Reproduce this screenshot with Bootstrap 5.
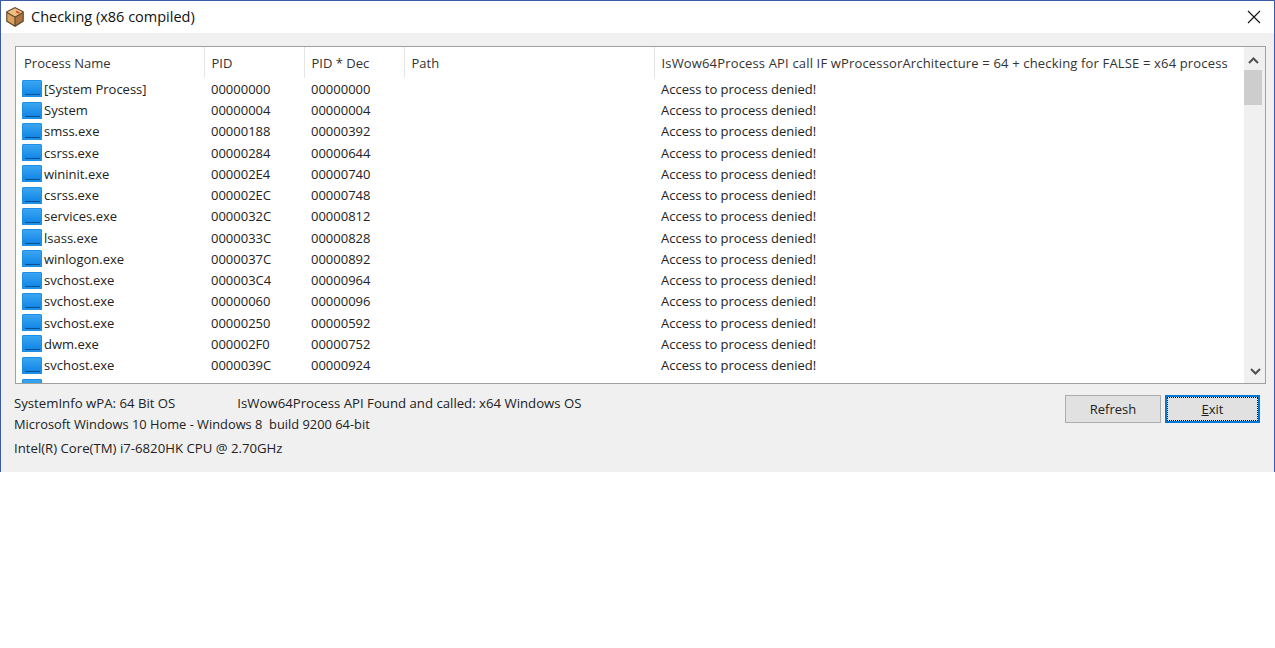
<!DOCTYPE html>
<html lang="en">
<head>
<meta charset="utf-8">
<title>Checking (x86 compiled)</title>
<link href="https://cdn.jsdelivr.net/npm/bootstrap@5.3.0/dist/css/bootstrap.min.css" rel="stylesheet">
<style>
html,body{background:#fff;margin:0;height:648px;overflow:hidden}
body{font-family:"Open Sans","Noto Sans",sans-serif;font-size:13px;color:#222}
.win{height:472px;width:1275px;background:#f0f0f0;border:1px solid #3b5ba8;border-bottom:0}
.titlebar{height:32px;background:#fff;padding-left:3px}
.titlebar .ttl{font-size:14.5px;color:#111;margin-left:5px}
.closex{margin-left:auto;margin-right:13px}
.lv{margin:13px 8px 0 14px;height:338px;border:1px solid #a0a0a0;background:#fff}
.lv-scroll{flex:1 1 auto;overflow:hidden;min-width:0}
.lv-table{table-layout:fixed;width:1228px;margin:0;--bs-table-bg:transparent;--bs-table-color:#222;color:#222}
.lv-table th,.lv-table td{padding:0 0 0 7px;white-space:nowrap;overflow:hidden;font-weight:400;vertical-align:middle;border:0}
.lv-table thead th{height:31px;padding-top:2px;color:#333}
.lv-table thead th:first-child{padding-left:8px}
.lv-table thead th+th{border-left:1px solid #e5e5e5}
.lv-table thead th.wide-head{letter-spacing:.16px}
.lv-table tbody td{height:21.25px;line-height:21px}
.lv-table tbody td:first-child{padding-left:6px}
.lv-table tbody tr:first-child td{height:22px}
.lv-table tbody tr:last-child td.tail{padding-top:3px}
.ico{display:inline-block;width:20px;height:17px;vertical-align:middle;margin-right:2px;margin-top:-3px}
.sb{width:21px;flex:0 0 21px;background:#f0f0f0;padding-top:23px}
.sb-thumb{height:35px;background:#cdcdcd;margin:0 3px 0 0}
.sb-arrow{display:block;margin:0 4px 0 auto}
.sb-up{position:absolute;margin:-13px 0 0 4px}
.foot{padding:9px 14px 0 13px;font-size:13.2px}
.foot-line{height:21px;line-height:20px}
.foot-line.l2{font-size:12.85px}
.foot-line.l3{height:24px;padding-top:3px}
.gap1{margin-left:62px}
.wbtn{width:96px;height:28px;background:#e1e1e1;border:1px solid #adadad;border-radius:0;padding:0;font-size:13px;color:#222;line-height:24px}
.wbtn:hover{background:#e1e1e1}
.wbtn-def{border:2px solid #0078d7;width:95px}
.wbtn-def .dots{display:block;height:100%;border:1px dotted #111;line-height:22px}
.btns{gap:4px;margin-top:2px}
</style>
</head>
<body>
<div class="win">
  <div class="titlebar d-flex align-items-center">
    <svg width="22" height="22" viewBox="0 0 20 20"><path d="M10 1 L18 5 V14 L10 19 L2 14 V5Z" fill="#5e4226"/><path d="M10 2 L17 5.5 L10 9.5 L3 5.5Z" fill="#eec07f"/><path d="M3 6.5 L9.5 10.5 V17.5 L3 13.5Z" fill="#d9a35f"/><path d="M10.5 10.5 L17 6.5 V13.5 L10.5 17.5Z" fill="#a9743f"/><path d="M11 5 L14 6.5" stroke="#c8402c" stroke-width="1.4"/></svg>
    <span class="ttl">Checking (x86 compiled)</span>
    <svg class="closex" width="14" height="14" viewBox="0 0 14 14"><path d="M1 1L13 13M13 1L1 13" stroke="#111" stroke-width="1.1" fill="none"/></svg>
  </div>
  <div class="lv d-flex">
    <div class="lv-scroll">
      <table class="table table-borderless lv-table">
        <colgroup><col style="width:188px"><col style="width:100px"><col style="width:100px"><col style="width:250px"><col style="width:590px"></colgroup>
        <thead><tr><th>Process Name</th><th>PID</th><th>PID * Dec</th><th>Path</th><th class="wide-head">IsWow64Process API call IF wProcessorArchitecture = 64 + checking for FALSE = x64 process</th></tr></thead>
        <tbody id="rows"></tbody>
      </table>
    </div>
    <div class="sb d-flex flex-column">
      <svg class="sb-arrow sb-up" width="11" height="7" viewBox="0 0 11 7"><path d="M1 6L5.5 1.5L10 6" stroke="#505050" stroke-width="2" fill="none"/></svg>
      <div class="sb-thumb"></div>
      <svg class="sb-arrow mt-auto mb-2" width="11" height="7" viewBox="0 0 11 7"><path d="M1 1L5.5 5.5L10 1" stroke="#505050" stroke-width="2" fill="none"/></svg>
    </div>
  </div>
  <div class="foot d-flex justify-content-between">
    <div>
      <div class="foot-line">SystemInfo wPA: 64 Bit OS<span class="gap1">IsWow64Process API Found and called: x64 Windows OS</span></div>
      <div class="foot-line l2">Microsoft Windows 10 Home - Windows 8&nbsp; build 9200 64-bit</div>
      <div class="foot-line l3">Intel(R) Core(TM) i7-6820HK CPU @ 2.70GHz</div>
    </div>
    <div class="d-flex btns align-items-start">
      <button type="button" class="btn wbtn">Refresh</button>
      <button type="button" class="btn wbtn wbtn-def"><span class="dots"><u>E</u>xit</span></button>
    </div>
  </div>
</div>
<script>
const d=[["[System Process]","00000000","00000000"],["System","00000004","00000004"],["smss.exe","00000188","00000392"],["csrss.exe","00000284","00000644"],["wininit.exe","000002E4","00000740"],["csrss.exe","000002EC","00000748"],["services.exe","0000032C","00000812"],["lsass.exe","0000033C","00000828"],["winlogon.exe","0000037C","00000892"],["svchost.exe","000003C4","00000964"],["svchost.exe","00000060","00000096"],["svchost.exe","00000250","00000592"],["dwm.exe","000002F0","00000752"],["svchost.exe","0000039C","00000924"],["","",""]];
const ic='<svg class="ico" viewBox="0 0 20 17"><defs><linearGradient id="g" x1="0" y1="0" x2="0" y2="1"><stop offset="0" stop-color="#3aa6f2"/><stop offset="1" stop-color="#1387e6"/></linearGradient></defs><path d="M1 0H19L20 1V17H0V1Z" fill="#1c8fe6"/><rect x="1" y="1" width="18" height="13" fill="url(#g)"/><rect x="3" y="14" width="15" height="1" fill="#0d4f8f"/></svg>';
document.getElementById('rows').innerHTML=d.map(r=>`<tr><td>${ic}${r[0]}</td><td>${r[1]}</td><td>${r[2]}</td><td></td><td class="tail">Access to process denied!</td></tr>`).join('');
</script>
<script src="https://cdn.jsdelivr.net/npm/bootstrap@5.3.0/dist/js/bootstrap.bundle.min.js"></script>
</body>
</html>
